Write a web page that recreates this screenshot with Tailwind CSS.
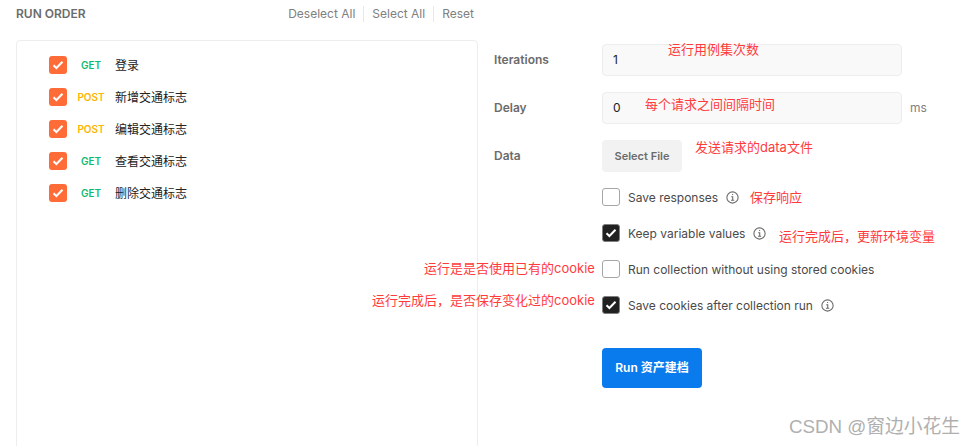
<!DOCTYPE html>
<html>

<head>
    <meta charset="UTF-8">
    <title>Run Order</title>
    <script src="https://cdn.jsdelivr.net/npm/@tailwindcss/browser@4"></script>
</head>

<body class="bg-white h-[446px] overflow-hidden relative font-['Inter','Noto_Sans_CJK_SC',sans-serif] text-[12px]">
    <div class="flex pl-[16px] h-[446px]">
        <!-- left column -->
        <div class="w-[462px] shrink-0">
            <div class="flex items-center justify-between h-[40px] pb-[12px]">
                <span class="font-semibold text-[#6b6b6b]">RUN ORDER</span>
                <div class="flex items-center text-[#808080] mr-[4px]">
                    <span class="pr-[8px] border-r border-[#e8e8e8] leading-[16px]">Deselect All</span>
                    <span class="px-[8px] border-r border-[#e8e8e8] leading-[16px]">Select All</span>
                    <span class="pl-[8px] leading-[16px]">Reset</span>
                </div>
            </div>
            <div class="border border-[#ededed] rounded-[4px] h-[420px] pt-[8px] pl-[32px]">
                <div class="flex items-center h-[32px]">
                    <span class="w-[18px] h-[18px] rounded-[3px] bg-[#ff6c37] flex items-center justify-center shrink-0"><svg width="12" height="10" viewBox="0 0 12 10" fill="none"><path d="M1.5 5.2 4.4 8 10.5 1.8" stroke="#fff" stroke-width="2"/></svg></span>
                    <span class="w-[48px] text-center text-[10px] font-semibold text-[#10bb74]">GET</span>
                    <span class="text-[#222] pt-[2px]">登录</span>
                </div>
                <div class="flex items-center h-[32px]">
                    <span class="w-[18px] h-[18px] rounded-[3px] bg-[#ff6c37] flex items-center justify-center shrink-0"><svg width="12" height="10" viewBox="0 0 12 10" fill="none"><path d="M1.5 5.2 4.4 8 10.5 1.8" stroke="#fff" stroke-width="2"/></svg></span>
                    <span class="w-[48px] text-center text-[10px] font-semibold text-[#ffb400]">POST</span>
                    <span class="text-[#222] pt-[2px]">新增交通标志</span>
                </div>
                <div class="flex items-center h-[32px]">
                    <span class="w-[18px] h-[18px] rounded-[3px] bg-[#ff6c37] flex items-center justify-center shrink-0"><svg width="12" height="10" viewBox="0 0 12 10" fill="none"><path d="M1.5 5.2 4.4 8 10.5 1.8" stroke="#fff" stroke-width="2"/></svg></span>
                    <span class="w-[48px] text-center text-[10px] font-semibold text-[#ffb400]">POST</span>
                    <span class="text-[#222] pt-[2px]">编辑交通标志</span>
                </div>
                <div class="flex items-center h-[32px]">
                    <span class="w-[18px] h-[18px] rounded-[3px] bg-[#ff6c37] flex items-center justify-center shrink-0"><svg width="12" height="10" viewBox="0 0 12 10" fill="none"><path d="M1.5 5.2 4.4 8 10.5 1.8" stroke="#fff" stroke-width="2"/></svg></span>
                    <span class="w-[48px] text-center text-[10px] font-semibold text-[#10bb74]">GET</span>
                    <span class="text-[#222] pt-[2px]">查看交通标志</span>
                </div>
                <div class="flex items-center h-[32px]">
                    <span class="w-[18px] h-[18px] rounded-[3px] bg-[#ff6c37] flex items-center justify-center shrink-0"><svg width="12" height="10" viewBox="0 0 12 10" fill="none"><path d="M1.5 5.2 4.4 8 10.5 1.8" stroke="#fff" stroke-width="2"/></svg></span>
                    <span class="w-[48px] text-center text-[10px] font-semibold text-[#10bb74]">GET</span>
                    <span class="text-[#222] pt-[2px]">删除交通标志</span>
                </div>
            </div>
        </div>

        <!-- right column -->
        <div class="pl-[16px] pt-[44px] w-[498px] shrink-0">
            <div class="flex items-center h-[32px] mb-[16px]">
                <span class="w-[108px] font-semibold text-[#6b6b6b]">Iterations</span>
                <div class="w-[300px] h-[32px] bg-[#f9f9f9] border border-[#ededed] rounded-[4px] flex items-center pl-[10px] text-[#212121]">1</div>
            </div>
            <div class="flex items-center h-[32px] mb-[16px]">
                <span class="w-[108px] font-semibold text-[#6b6b6b]">Delay</span>
                <div class="w-[300px] h-[32px] bg-[#f9f9f9] border border-[#ededed] rounded-[4px] flex items-center pl-[10px] text-[#212121]">0</div>
                <span class="ml-[8px] text-[#808080]">ms</span>
            </div>
            <div class="flex items-center h-[32px] mb-[16px]">
                <span class="w-[108px] font-semibold text-[#6b6b6b]">Data</span>
                <div class="w-[80px] h-[32px] bg-[#f2f2f2] rounded-[4px] flex items-center justify-center text-[11px] font-semibold text-[#6b6b6b]">Select File</div>
            </div>
            <div class="pl-[108px]">
                <div class="flex items-center h-[18px] mb-[18px] text-[#4a4a4a]">
                    <span class="w-[18px] h-[18px] rounded-[3px] border border-[#a6a6a6] shrink-0"></span>
                    <span class="ml-[8px] pt-[1px]">Save responses</span>
                    <svg class="ml-[8px]" width="13" height="13" viewBox="0 0 12 12" fill="none"><circle cx="6" cy="6" r="5.2" stroke="#6b6b6b"/><path d="M4.8 5.3H6.2V8.6M4.6 8.6H7.6M5.6 3.2H6.6" stroke="#6b6b6b"/></svg>
                </div>
                <div class="flex items-center h-[18px] mb-[18px] text-[#4a4a4a]">
                    <span class="w-[18px] h-[18px] rounded-[3px] bg-[#212121] border border-[#808080] flex items-center justify-center shrink-0"><svg width="12" height="10" viewBox="0 0 12 10" fill="none"><path d="M1.5 5.2 4.4 8 10.5 1.8" stroke="#fff" stroke-width="2"/></svg></span>
                    <span class="ml-[8px] pt-[1px]">Keep variable values</span>
                    <svg class="ml-[8px]" width="13" height="13" viewBox="0 0 12 12" fill="none"><circle cx="6" cy="6" r="5.2" stroke="#6b6b6b"/><path d="M4.8 5.3H6.2V8.6M4.6 8.6H7.6M5.6 3.2H6.6" stroke="#6b6b6b"/></svg>
                </div>
                <div class="flex items-center h-[18px] mb-[18px] text-[#4a4a4a]">
                    <span class="w-[18px] h-[18px] rounded-[3px] border border-[#a6a6a6] shrink-0"></span>
                    <span class="ml-[8px] pt-[1px]">Run collection without using stored cookies</span>
                </div>
                <div class="flex items-center h-[18px] text-[#4a4a4a]">
                    <span class="w-[18px] h-[18px] rounded-[3px] bg-[#212121] border border-[#808080] flex items-center justify-center shrink-0"><svg width="12" height="10" viewBox="0 0 12 10" fill="none"><path d="M1.5 5.2 4.4 8 10.5 1.8" stroke="#fff" stroke-width="2"/></svg></span>
                    <span class="ml-[8px] pt-[1px]">Save cookies after collection run</span>
                    <svg class="ml-[8px]" width="13" height="13" viewBox="0 0 12 12" fill="none"><circle cx="6" cy="6" r="5.2" stroke="#6b6b6b"/><path d="M4.8 5.3H6.2V8.6M4.6 8.6H7.6M5.6 3.2H6.6" stroke="#6b6b6b"/></svg>
                </div>
                <div class="w-[100px] h-[40px] mt-[34px] bg-[#097bed] rounded-[4px] flex items-center justify-center text-white font-semibold">Run 资产建档</div>
            </div>
        </div>
    </div>

    <!-- red notes drawn over the screenshot -->
    <span class="absolute left-[668px] top-[40px] text-[13px] leading-[18px] text-[#ff3b3b]">运行用例集次数</span>
    <span class="absolute left-[645px] top-[95px] text-[13px] leading-[18px] text-[#ff3b3b]">每个请求之间间隔时间</span>
    <span class="absolute left-[695px] top-[138px] text-[13px] leading-[18px] text-[#ff3b3b]">发送请求的data文件</span>
    <span class="absolute left-[750px] top-[188px] text-[13px] leading-[18px] text-[#ff3b3b]">保存响应</span>
    <span class="absolute left-[779px] top-[227px] text-[13px] leading-[18px] text-[#ff3b3b]">运行完成后，更新环境变量</span>
    <span class="absolute left-[424px] top-[259px] text-[13px] leading-[18px] text-[#ff3b3b]">运行是是否使用已有的cookie</span>
    <span class="absolute left-[372px] top-[291px] text-[13px] leading-[18px] text-[#ff3b3b]">运行完成后，是否保存变化过的cookie</span>
    <span class="absolute left-[789px] top-[414px] text-[18.75px] leading-[26px] text-[#b0b0b0] font-['Liberation_Sans','Noto_Sans_CJK_SC',sans-serif]">CSDN @窗边小花生</span>
</body>

</html>
